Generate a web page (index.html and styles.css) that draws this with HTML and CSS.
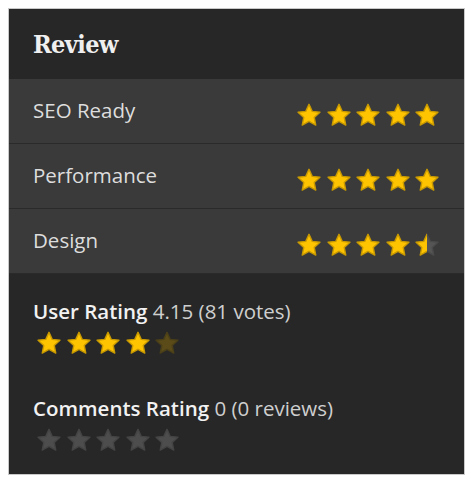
FILE: index.html
```html
<!DOCTYPE html>
<html>
<head>
<meta charset="utf-8">
<link rel="stylesheet" href="styles.css">
</head>
<body>
<svg class="defs" width="0" height="0" aria-hidden="true">
  <defs>
    <symbol id="star" viewBox="0 0 24 24">
      <polygon points="12,1.3 15.23,8.35 22.94,9.25 17.23,14.5 18.76,22.1 12,18.3 5.24,22.1 6.77,14.5 1.06,9.25 8.77,8.35"/>
    </symbol>
    <linearGradient id="half" x1="0" x2="1" y1="0" y2="0">
      <stop offset="0.5" stop-color="#ffc400"/>
      <stop offset="0.5" stop-color="#555555"/>
    </linearGradient>
    <linearGradient id="halfStroke" x1="0" x2="1" y1="0" y2="0">
      <stop offset="0.5" stop-color="#c99a00"/>
      <stop offset="0.5" stop-color="#4a4a4a"/>
    </linearGradient>
  </defs>
</svg>
<div class="review">
  <div class="review-title">Review</div>
  <div class="criteria">
    <div class="criterion">
      <span class="criterion-label">SEO Ready</span>
      <span class="stars">
        <svg class="star on"><use href="#star"/></svg>
        <svg class="star on"><use href="#star"/></svg>
        <svg class="star on"><use href="#star"/></svg>
        <svg class="star on"><use href="#star"/></svg>
        <svg class="star on"><use href="#star"/></svg>
      </span>
    </div>
    <div class="criterion">
      <span class="criterion-label">Performance</span>
      <span class="stars">
        <svg class="star on"><use href="#star"/></svg>
        <svg class="star on"><use href="#star"/></svg>
        <svg class="star on"><use href="#star"/></svg>
        <svg class="star on"><use href="#star"/></svg>
        <svg class="star on"><use href="#star"/></svg>
      </span>
    </div>
    <div class="criterion">
      <span class="criterion-label">Design</span>
      <span class="stars">
        <svg class="star on"><use href="#star"/></svg>
        <svg class="star on"><use href="#star"/></svg>
        <svg class="star on"><use href="#star"/></svg>
        <svg class="star on"><use href="#star"/></svg>
        <svg class="star half"><use href="#star"/></svg>
      </span>
    </div>
  </div>
  <div class="summary">
    <div class="summary-item">
      <div class="summary-text"><strong>User Rating</strong> 4.15 (81 votes)</div>
      <span class="stars">
        <svg class="star on"><use href="#star"/></svg>
        <svg class="star on"><use href="#star"/></svg>
        <svg class="star on"><use href="#star"/></svg>
        <svg class="star on"><use href="#star"/></svg>
        <svg class="star dim"><use href="#star"/></svg>
      </span>
    </div>
    <div class="summary-item">
      <div class="summary-text"><strong>Comments Rating</strong> 0 (0 reviews)</div>
      <span class="stars">
        <svg class="star off"><use href="#star"/></svg>
        <svg class="star off"><use href="#star"/></svg>
        <svg class="star off"><use href="#star"/></svg>
        <svg class="star off"><use href="#star"/></svg>
        <svg class="star off"><use href="#star"/></svg>
      </span>
    </div>
  </div>
</div>
</body>
</html>
```

FILE: styles.css
```css
html, body {
  margin: 0;
  padding: 0;
  background: #ffffff;
}

body {
  padding: 8px;
  font-family: "Open Sans", "Liberation Sans", sans-serif;
}

.defs {
  position: absolute;
  width: 0;
  height: 0;
}

.review {
  width: 455px;
  background: #272727;
  border: 1px solid #c9c9c9;
  color: #dcdcdc;
}

.review-title {
  height: 70px;
  padding-left: 24px;
  display: flex;
  align-items: center;
  font-family: "DejaVu Serif", "Liberation Serif", serif;
  font-stretch: condensed;
  font-weight: bold;
  font-size: 25px;
  color: #f0f0f0;
  letter-spacing: -0.6px;
}

.criterion {
  height: 64px;
  background: #3a3a3a;
  border-bottom: 1px solid #2a2a2a;
  display: flex;
  align-items: center;
  justify-content: space-between;
  padding: 0 25px 0 24px;
}

.criterion-label {
  font-size: 20.5px;
  color: #dddddd;
  margin-top: -2px;
}

.stars {
  display: flex;
  gap: 5.5px;
}

.criterion .stars {
  margin-top: 8px;
}

.star {
  width: 24px;
  height: 24px;
  stroke-width: 1.4;
  stroke-linejoin: round;
}

.star.on {
  fill: #ffc400;
  stroke: #c99a00;
}

.star.half {
  fill: url(#half);
  stroke: url(#halfStroke);
}

.star.dim {
  fill: #5a4b18;
  stroke: #4a3f18;
}

.star.off {
  fill: #4d4d4d;
  stroke: #444444;
}

.summary {
  padding: 23px 24px 22px 28px;
  display: flex;
  flex-direction: column;
  gap: 39px;
}

.summary-text {
  font-size: 20.5px;
  line-height: 28px;
  color: #cfcfcf;
  margin-left: -4px;
  margin-bottom: 6px;
}

.summary-text strong {
  font-weight: 600;
  color: #f2f2f2;
}
```
